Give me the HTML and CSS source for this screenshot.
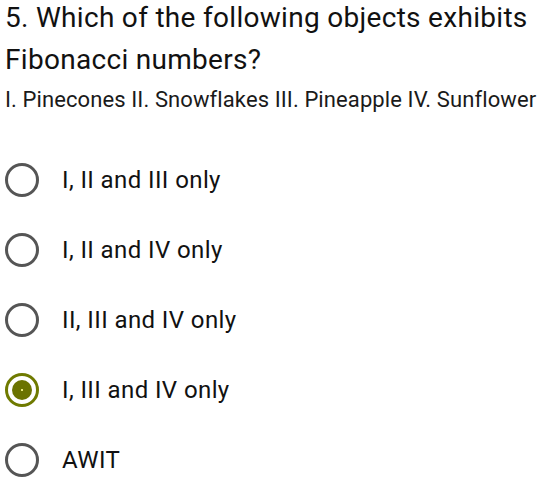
FILE: index.html
```html
<!DOCTYPE html>
<html>
<head>
<meta charset="utf-8">
<link rel="stylesheet" href="styles.css">
</head>
<body>
<div class="page">
  <h1 class="question">5. Which of the following objects exhibits Fibonacci numbers?</h1>
  <p class="items">I. Pinecones II. Snowflakes III. Pineapple IV. Sunflower</p>
  <ul class="options">
    <li class="option"><span class="radio"></span><span class="label">I, II and III only</span></li>
    <li class="option"><span class="radio"></span><span class="label">I, II and IV only</span></li>
    <li class="option"><span class="radio"></span><span class="label">II, III and IV only</span></li>
    <li class="option"><span class="radio checked"><span class="dot"></span></span><span class="label">I, III and IV only</span></li>
    <li class="option"><span class="radio"></span><span class="label">AWIT</span></li>
  </ul>
</div>
</body>
</html>
```
FILE: styles.css
```css
html, body {
  margin: 0;
  padding: 0;
  background: #ffffff;
}
.page {
  font-family: Roboto, "Liberation Sans", sans-serif;
  color: #111111;
  padding: 0 0 0 5px;
}
.question {
  margin: -3px 0 0 0;
  font-size: 28px;
  font-weight: 400;
  line-height: 42px;
  letter-spacing: 0.3px;
  width: 534px;
}
.items {
  margin: 6px 0 0 0;
  font-size: 22px;
  line-height: 26px;
  letter-spacing: 0.1px;
  color: #1a1a1a;
  white-space: nowrap;
}
.options {
  list-style: none;
  margin: 50px 0 0 0;
  padding: 0;
  display: flex;
  flex-direction: column;
  gap: 36px;
}
.option {
  display: flex;
  align-items: center;
  height: 34px;
  gap: 23px;
}
.radio {
  box-sizing: border-box;
  width: 34px;
  height: 34px;
  border: 3px solid #555555;
  border-radius: 50%;
  flex: none;
  display: flex;
  align-items: center;
  justify-content: center;
}
.radio.checked {
  border-color: #6f7a00;
}
.radio.checked .dot {
  width: 20px;
  height: 20px;
  border-radius: 50%;
  background: #6b7300;
  position: relative;
}
.radio.checked .dot::after {
  content: "";
  position: absolute;
  left: 9px;
  top: 9px;
  width: 2px;
  height: 2px;
  background: #e6e67a;
}
.label {
  font-size: 24px;
  letter-spacing: 0.4px;
  color: #111;
}
```
